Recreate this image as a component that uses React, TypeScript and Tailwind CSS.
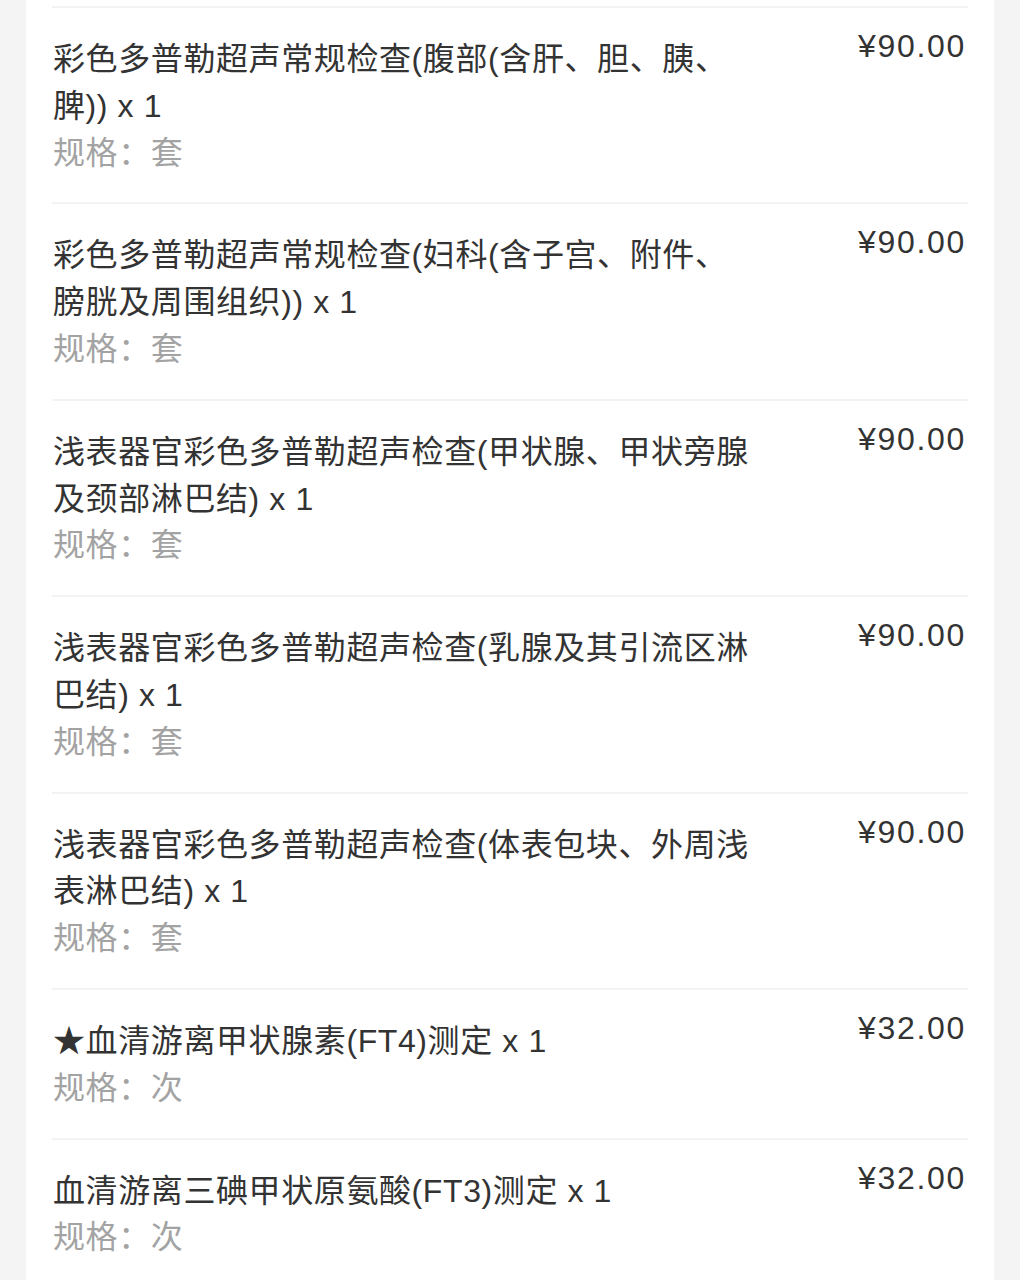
import React from "react";

type Item = { lines: string[]; spec: string; price: string };

const items: Item[] = [
  { lines: ["彩色多普勒超声常规检查(腹部(含肝、胆、胰、", "脾)) x 1"], spec: "套", price: "¥90.00" },
  { lines: ["彩色多普勒超声常规检查(妇科(含子宫、附件、", "膀胱及周围组织)) x 1"], spec: "套", price: "¥90.00" },
  { lines: ["浅表器官彩色多普勒超声检查(甲状腺、甲状旁腺", "及颈部淋巴结) x 1"], spec: "套", price: "¥90.00" },
  { lines: ["浅表器官彩色多普勒超声检查(乳腺及其引流区淋", "巴结) x 1"], spec: "套", price: "¥90.00" },
  { lines: ["浅表器官彩色多普勒超声检查(体表包块、外周浅", "表淋巴结) x 1"], spec: "套", price: "¥90.00" },
  { lines: ["★血清游离甲状腺素(FT4)测定 x 1"], spec: "次", price: "¥32.00" },
  { lines: ["血清游离三碘甲状原氨酸(FT3)测定 x 1"], spec: "次", price: "¥32.00" },
];

const font = {
  fontFamily: '"Liberation Sans", "Noto Sans CJK SC", sans-serif',
};

export default function App() {
  return (
    <div className="w-[1020px] h-[1280px] overflow-hidden bg-[#f4f4f4] px-[26px]" style={font}>
      <div className="bg-white h-full px-[26px] pt-[6px]">
        {items.map((it, i) => (
          <div key={i} className="border-t-2 border-[#f3f3f3] pl-px pr-[2px]">
            <div className="flex justify-between items-start pt-[15px] pb-[26px]">
              <div className="mt-[13px] text-[32px] leading-[46.8px] tracking-[0.6px]">
                {it.lines.map((l, j) => (
                  <div key={j} className="text-[#333333] whitespace-nowrap">
                    {l}
                  </div>
                ))}
                <div className="text-[#a3a3a3] whitespace-nowrap">规格：{it.spec}</div>
              </div>
              <div className="text-[32px] leading-[46.8px] tracking-[1.7px] text-[#333333]">{it.price}</div>
            </div>
          </div>
        ))}
      </div>
    </div>
  );
}
